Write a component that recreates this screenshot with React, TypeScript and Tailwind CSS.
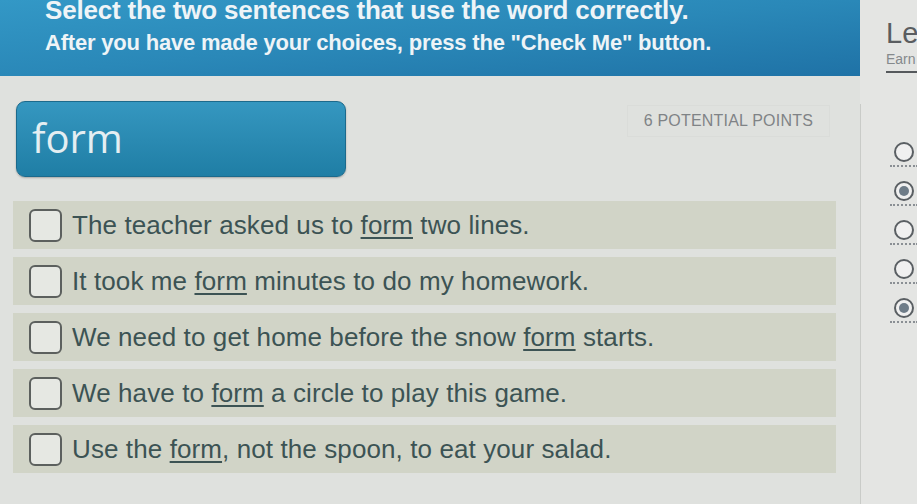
import React from "react";

type Choice = { before: string; after: string };

const choices: Choice[] = [
  { before: "The teacher asked us to ", after: " two lines." },
  { before: "It took me ", after: " minutes to do my homework." },
  { before: "We need to get home before the snow ", after: " starts." },
  { before: "We have to ", after: " a circle to play this game." },
  { before: "Use the ", after: ", not the spoon, to eat your salad." },
];

const radios = [false, true, false, false, true];

function Radio({ on }: { on: boolean }) {
  return (
    <div className="flex flex-col items-start h-[39px]">
      <div className="ml-[33px] w-[20px] h-[20px] rounded-full border-2 border-[#5a5f63] bg-[#f0f0f0] flex items-center justify-center">
        {on && <div className="w-[10px] h-[10px] rounded-full bg-[#6e7c88]" />}
      </div>
      <div className="ml-[29px] mt-[3px] w-[28px] border-t-2 border-dotted border-[#8a8f94]" />
    </div>
  );
}

export default function App() {
  return (
    <div
      className="w-[917px] h-[504px] overflow-hidden flex bg-[#dfe1de]"
      style={{ fontFamily: '"Liberation Sans", Arial, sans-serif' }}
    >
      <div className="w-[860px] shrink-0 flex flex-col">
        <div className="h-[76px] pl-[45px] bg-gradient-to-br from-[#3398c6] via-[#2a88b8] to-[#1f72a6] text-[#eef4f7] overflow-hidden">
          <div className="-mt-[5px] text-[26px] font-bold leading-[30px] tracking-[-0.2px]">
            Select the two sentences that use the word correctly.
          </div>
          <div className="mt-[5px] text-[22px] font-bold leading-[26px] tracking-[-0.2px]">
            After you have made your choices, press the "Check Me" button.
          </div>
        </div>

        <div className="flex items-start mt-[25px]">
          <div className="ml-[16px] w-[330px] h-[76px] rounded-[9px] border border-[#1c6a8c] bg-gradient-to-b from-[#3597c0] to-[#1f7ea5] flex items-center pl-[15px] shadow-[0_1px_2px_rgba(0,0,0,0.25)]">
            <span
              className="text-[40px] text-[#e4eef2] leading-none -mt-[2px]"
              style={{ fontFamily: '"Open Sans", "Noto Sans", sans-serif' }}
            >
              form
            </span>
          </div>
          <div className="ml-auto mr-[30px] mt-[4px] px-[16px] py-[3px] border border-[#dadcd9] text-[16px] text-[#7f8386] tracking-[0.2px]">
            6 POTENTIAL POINTS
          </div>
        </div>

        <div className="mt-[24px] ml-[13px] w-[823px] flex flex-col gap-2">
          {choices.map((c, i) => (
            <div
              key={i}
              className="h-12 bg-[#d1d4c7] flex items-center pl-4 gap-[10px]"
            >
              <div className="w-[33px] h-[33px] rounded-md border-2 border-[#5c605e] bg-[#e6e8e3] shrink-0" />
              <span className="text-[26px] text-[#3c5354] leading-none tracking-[0.1px]">
                {c.before}
                <span className="underline decoration-[1.5px] underline-offset-[3px]">form</span>
                {c.after}
              </span>
            </div>
          ))}
        </div>
      </div>

      <div className="flex-1 min-w-0 overflow-hidden flex flex-col bg-[#e4e5e3]">
        <div className="h-[76px] pl-[26px] pt-[18px]">
          <div className="text-[29px] leading-[30px] text-[#5a5d60]">Le</div>
          <div className="mt-[3px] text-[14px] leading-[16px] text-[#85898c]">Earn</div>
          <div className="mt-[4px] h-[2px] bg-[#55595c]" />
        </div>
        <div className="flex-1 border-l border-[#c9cbc8] mt-[28px] pt-[38px]">
          {radios.map((on, i) => (
            <Radio key={i} on={on} />
          ))}
        </div>
      </div>
    </div>
  );
}
